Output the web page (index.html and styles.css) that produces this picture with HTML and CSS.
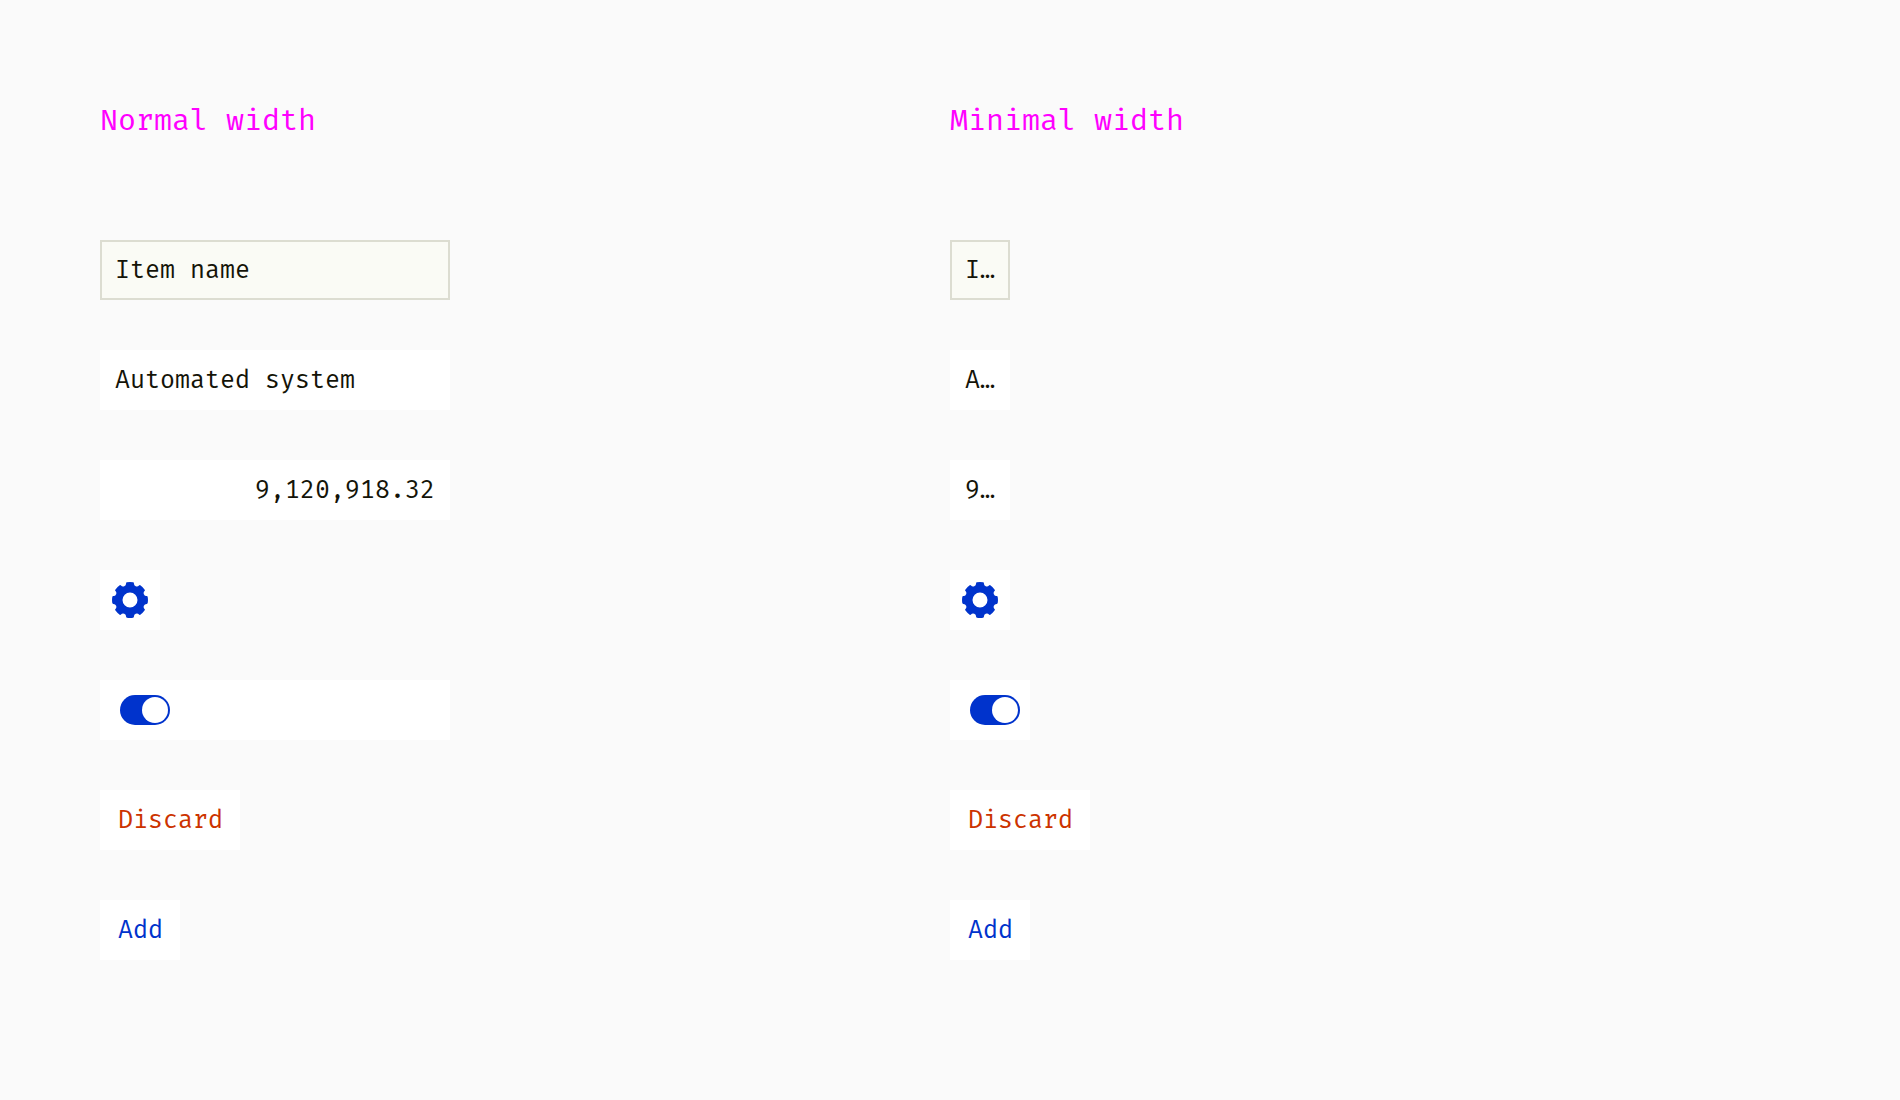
FILE: index.html
```html
<!DOCTYPE html>
<html lang="en">
<head>
<meta charset="utf-8">
<meta name="viewport" content="width=device-width, initial-scale=1">
<title>Widget widths</title>
<link rel="stylesheet" href="styles.css">
</head>
<body>
<svg class="symbols" aria-hidden="true">
  <symbol id="gear" viewBox="0 0 36 36">
    <path fill-rule="evenodd" d="M14.900 .3A18 18 0 0 1 21.100 .3A1 1 0 0 1 21.900 1.400A3 3 0 0 0 27 3.500A1 1 0 0 1 28.300 3.300A18 18 0 0 1 32.700 7.700A1 1 0 0 1 32.500 9A3 3 0 0 0 34.600 14.100A1 1 0 0 1 35.700 14.900A18 18 0 0 1 35.700 21.100A1 1 0 0 1 34.600 21.900A3 3 0 0 0 32.500 27A1 1 0 0 1 32.700 28.300A18 18 0 0 1 28.300 32.700A1 1 0 0 1 27 32.500A3 3 0 0 0 21.900 34.600A1 1 0 0 1 21.100 35.700A18 18 0 0 1 14.900 35.700A1 1 0 0 1 14.100 34.600A3 3 0 0 0 9 32.500A1 1 0 0 1 7.700 32.700A18 18 0 0 1 3.300 28.300A1 1 0 0 1 3.500 27A3 3 0 0 0 1.400 21.900A1 1 0 0 1 .3 21.100A18 18 0 0 1 .3 14.900A1 1 0 0 1 1.400 14.100A3 3 0 0 0 3.500 9A1 1 0 0 1 3.300 7.700A18 18 0 0 1 7.700 3.300A1 1 0 0 1 9 3.500A3 3 0 0 0 14.100 1.400A1 1 0 0 1 14.900 .3zM18 10.500a7.500 7.500 0 1 0 0 15a7.500 7.500 0 1 0 0-15z"/>
  </symbol>
</svg>
<main class="board">
  <section class="column">
    <h2 class="title">Normal width</h2>
    <input class="cell cell-header" type="text" value="Item name" aria-label="Item name">
    <div class="cell">Automated system</div>
    <div class="cell cell-number">9,120,918.32</div>
    <button class="button button-icon" type="button" aria-label="Settings"><svg class="icon"><use href="#gear"/></svg></button>
    <label class="switch-cell"><input class="switch" type="checkbox" role="switch" aria-label="Enabled" checked></label>
    <button class="button button-danger" type="button">Discard</button>
    <button class="button" type="button">Add</button>
  </section>
  <section class="column column-minimal">
    <h2 class="title">Minimal width</h2>
    <input class="cell cell-header" type="text" value="Item name" aria-label="Item name">
    <div class="cell">Automated system</div>
    <div class="cell cell-number">9,120,918.32</div>
    <button class="button button-icon" type="button" aria-label="Settings"><svg class="icon"><use href="#gear"/></svg></button>
    <label class="switch-cell"><input class="switch" type="checkbox" role="switch" aria-label="Enabled" checked></label>
    <button class="button button-danger" type="button">Discard</button>
    <button class="button" type="button">Add</button>
  </section>
</main>
</body>
</html>
```
FILE: styles.css
```css
*,
*::before {
  box-sizing: border-box;
}

body {
  margin: 0;
  background: #fafafa;
  color: #141408;
  font-family: "Fira Mono", "Liberation Mono", monospace;
  font-size: 25px;
  line-height: 30px;
}

.symbols {
  display: none;
}

.board {
  display: grid;
  grid-template-columns: 1fr 1fr;
  padding: 100px 100px 140px;
}

.column {
  display: flex;
  flex-direction: column;
  align-items: flex-start;
  gap: 50px;
  min-width: 0;
}

.title {
  margin: 0 0 50px;
  color: #ff00ff;
  font-size: 30px;
  font-weight: 400;
  line-height: 40px;
}

.cell {
  width: 350px;
  height: 60px;
  padding: 15px;
  overflow: hidden;
  background: #ffffff;
  text-overflow: ellipsis;
  white-space: nowrap;
}

.cell-header {
  padding: 13px;
  border: 2px solid #dcddd1;
  border-radius: 0;
  background: #fafbf5;
  color: inherit;
  font: inherit;
}

.cell-number {
  text-align: right;
}

.column-minimal .cell {
  width: 60px;
}

.button {
  height: 60px;
  padding: 0 17px 0 18px;
  border: 0;
  background: #ffffff;
  color: #0033cc;
  font: inherit;
}

.button-danger {
  color: #cc3300;
}

.button-icon {
  display: grid;
  place-items: center;
  width: 60px;
  padding: 0;
}

.icon {
  width: 36px;
  height: 36px;
  fill: currentColor;
}

.switch-cell {
  display: flex;
  align-items: center;
  width: 350px;
  height: 60px;
  padding: 0 10px 0 20px;
  background: #ffffff;
}

.column-minimal .switch-cell {
  width: 80px;
}

.switch {
  display: flex;
  justify-content: flex-start;
  flex: none;
  appearance: none;
  width: 50px;
  height: 30px;
  margin: 0;
  padding: 2px;
  border-radius: 15px;
  background: #0033cc;
}

.switch::before {
  content: "";
  width: 26px;
  height: 26px;
  border-radius: 50%;
  background: #ffffff;
}

.switch:checked {
  justify-content: flex-end;
}
```
